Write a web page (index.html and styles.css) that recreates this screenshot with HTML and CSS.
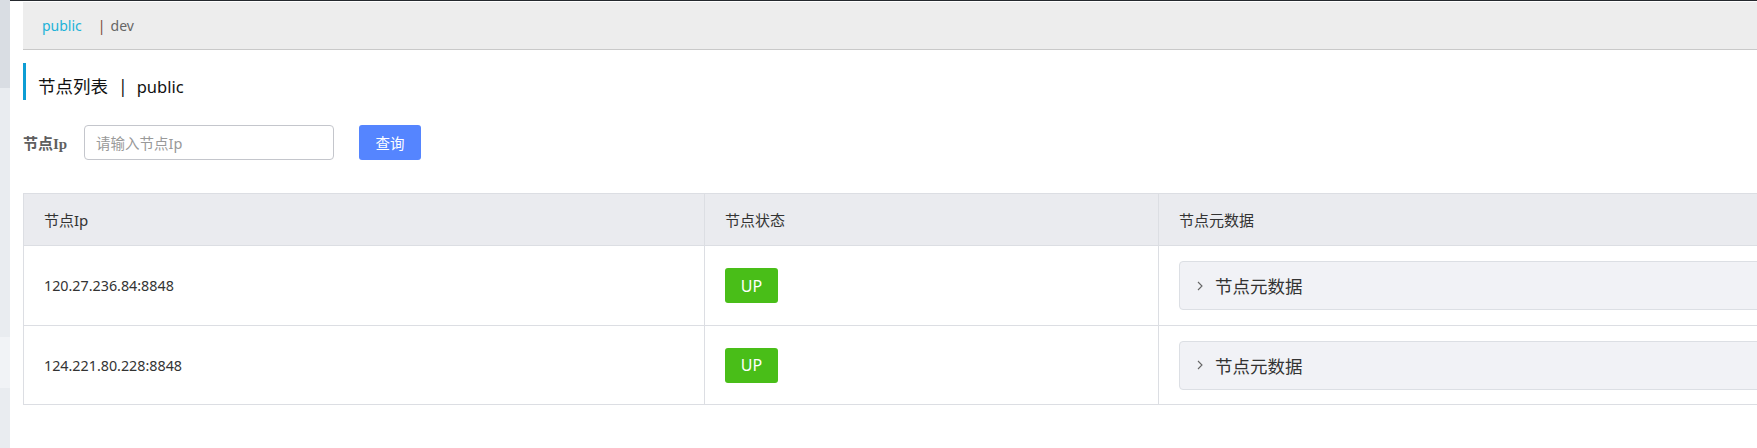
FILE: index.html
```html
<!DOCTYPE html>
<html lang="zh-CN">
<head>
<meta charset="utf-8">
<title>节点列表</title>
<link rel="stylesheet" href="styles.css">
</head>
<body>
<div class="layout">
  <aside class="sidebar">
    <div class="sb-top"></div>
    <div class="sb-mid"></div>
    <div class="sb-active"></div>
    <div class="sb-rest"></div>
  </aside>
  <main class="main">
    <nav class="ns-bar">
      <span class="ns-item ns-current">public</span>
      <span class="ns-sep">|</span>
      <span class="ns-item">dev</span>
    </nav>
    <h1 class="page-title"><span>节点列表</span><span class="title-sep">|</span><span class="title-ns">public</span></h1>
    <form class="search-row">
      <label class="search-label">节点Ip</label>
      <input class="search-input" type="text" placeholder="请输入节点Ip">
      <button class="search-btn" type="button">查询</button>
    </form>
    <div class="table">
      <div class="cell head">节点Ip</div>
      <div class="cell head">节点状态</div>
      <div class="cell head">节点元数据</div>

      <div class="cell row">120.27.236.84:8848</div>
      <div class="cell row"><span class="badge">UP</span></div>
      <div class="cell row"><div class="panel"><svg class="chev" width="6" height="10" viewBox="0 0 6 10"><path d="M1 1 L5 5 L1 9" fill="none" stroke="#666" stroke-width="1.1"/></svg><span>节点元数据</span></div></div>

      <div class="cell row">124.221.80.228:8848</div>
      <div class="cell row"><span class="badge">UP</span></div>
      <div class="cell row"><div class="panel"><svg class="chev" width="6" height="10" viewBox="0 0 6 10"><path d="M1 1 L5 5 L1 9" fill="none" stroke="#666" stroke-width="1.1"/></svg><span>节点元数据</span></div></div>
    </div>
  </main>
</div>
</body>
</html>
```

FILE: styles.css
```css
html, body {
  margin: 0;
  padding: 0;
  background: #fff;
  overflow: hidden;
}
body {
  font-family: "Noto Sans", "Noto Sans CJK SC", sans-serif;
  color: #333;
}
.layout {
  display: flex;
  width: 1757px;
  height: 448px;
}
.sidebar {
  width: 10px;
  flex: none;
  display: flex;
  flex-direction: column;
}
.sb-top { height: 88px; background: #d9dde3; }
.sb-mid { height: 249px; background: #e9ecf0; }
.sb-active { height: 51px; background: #f1f3f6; }
.sb-rest { flex: 1; background: #e9ecf0; }

.main {
  flex: 1;
  min-width: 0;
  overflow: hidden;
  border-top: 1px solid #25292e;
  padding: 1px 0 0 13px;
}
.ns-bar {
  height: 47px;
  background: #ededed;
  border-bottom: 1px solid #c9c9c9;
  display: flex;
  align-items: center;
  padding-left: 19px;
  font-size: 14px;
}
.ns-item { color: #666; }
.ns-item.ns-current { color: #22b2d8; }
.ns-sep { color: #7b4a36; margin-left: 16px; margin-right: 5px; }

.page-title {
  margin: 13px 0 0 0;
  height: 37px;
  box-sizing: border-box;
  border-left: 3px solid #0d9dd4;
  padding: 9px 0 0 12px;
  line-height: 28px;
  font-size: 17.5px;
  font-weight: normal;
  color: #111;
}
.title-sep { margin: 0 9px 0 10px; }
.title-ns { font-size: 16.5px; }

.search-row {
  margin: 25px 0 0 0;
  display: flex;
  align-items: center;
  height: 35px;
}
.search-label {
  width: 61px;
  font-family: "Liberation Serif", "Noto Sans CJK SC", serif;
  font-weight: bold;
  font-size: 15px;
  color: #5f5f5f;
}
.search-input {
  width: 250px;
  height: 35px;
  box-sizing: border-box;
  border: 1px solid #c4c6cc;
  border-radius: 4px;
  padding: 0 11px;
  font-family: "Noto Sans", "Noto Sans CJK SC", sans-serif;
  font-size: 14.5px;
  color: #333;
  outline: none;
}
.search-input::placeholder { color: #999; }
.search-btn {
  margin-left: 25px;
  width: 62px;
  height: 35px;
  border: none;
  border-radius: 3px;
  background: #5585ff;
  color: #fff;
  font-family: "Noto Sans", "Noto Sans CJK SC", sans-serif;
  font-size: 14.5px;
  padding: 0;
}

.table {
  margin-top: 33px;
  display: grid;
  grid-template-columns: 681px 454px 700px;
  grid-template-rows: 52px 80px 79px;
  width: 1835px;
  border-top: 1px solid #dcdee3;
  border-left: 1px solid #dcdee3;
}
.cell {
  border-right: 1px solid #dcdee3;
  border-bottom: 1px solid #dcdee3;
  display: flex;
  align-items: center;
  padding-left: 20px;
  font-size: 14.3px;
  color: #333;
}
.cell.head {
  background: #eaebef;
  font-size: 15px;
}
.badge {
  width: 53px;
  height: 35px;
  border-radius: 3px;
  background: #49be18;
  color: #fff;
  font-size: 16px;
  display: flex;
  align-items: center;
  justify-content: center;
}
.panel {
  flex: 1;
  height: 49px;
  box-sizing: border-box;
  border: 1px solid #dcdfe4;
  border-radius: 4px;
  background: #f1f2f6;
  display: flex;
  align-items: center;
  padding-left: 17px;
  font-size: 17.5px;
  color: #333;
}
.chev {
  margin-right: 12px;
}
```
